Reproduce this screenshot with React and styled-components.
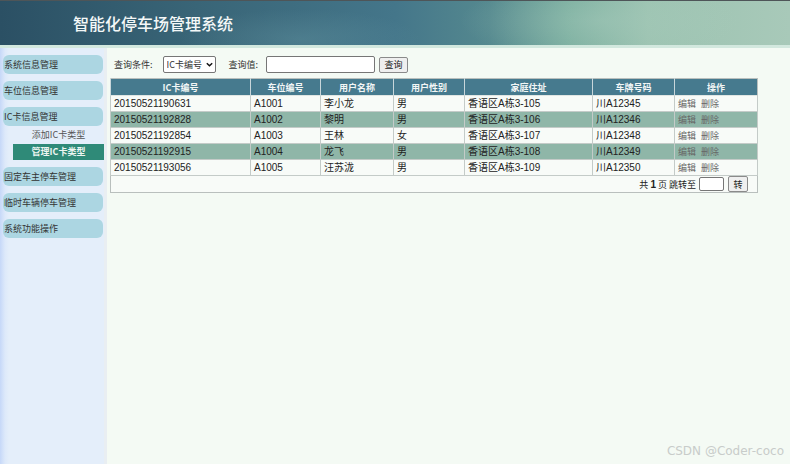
import React, { useState } from "react";
import styled, { createGlobalStyle } from "styled-components";

const GlobalStyle = createGlobalStyle`
  html, body {
    margin: 0;
    padding: 0;
    height: 100%;
    background: #f4faf4;
    font-family: "Liberation Sans", "Noto Sans CJK SC", sans-serif;
  }
  #root {
    height: 100%;
  }
`;

const menus = [
  { title: "系统信息管理" },
  { title: "车位信息管理" },
  { title: "IC卡信息管理", children: ["添加IC卡类型", "管理IC卡类型"] },
  { title: "固定车主停车管理" },
  { title: "临时车辆停车管理" },
  { title: "系统功能操作" },
];

const rows = [
  ["20150521190631", "A1001", "李小龙", "男", "香语区A栋3-105", "川A12345"],
  ["20150521192828", "A1002", "黎明", "男", "香语区A栋3-106", "川A12346"],
  ["20150521192854", "A1003", "王林", "女", "香语区A栋3-107", "川A12348"],
  ["20150521192915", "A1004", "龙飞", "男", "香语区A栋3-108", "川A12349"],
  ["20150521193056", "A1005", "汪苏泷", "男", "香语区A栋3-109", "川A12350"],
];

const columns = [
  { label: "IC卡编号", width: 140 },
  { label: "车位编号", width: 70 },
  { label: "用户名称", width: 73 },
  { label: "用户性别", width: 71 },
  { label: "家庭住址", width: 128 },
  { label: "车牌号码", width: 82 },
  { label: "操作", width: 83 },
];

export default function App() {
  const [active, setActive] = useState("管理IC卡类型");
  return (
    <Page>
      <GlobalStyle />
      <Header>
        <h1>智能化停车场管理系统</h1>
      </Header>
      <Body>
        <Sidebar>
          {menus.map((menu) => (
            <MenuGroup key={menu.title}>
              <MenuPill>{menu.title}</MenuPill>
              {menu.children && (
                <SubList>
                  {menu.children.map((child) => (
                    <SubItem
                      key={child}
                      $active={active === child}
                      onClick={() => setActive(child)}
                    >
                      {child}
                    </SubItem>
                  ))}
                </SubList>
              )}
            </MenuGroup>
          ))}
        </Sidebar>
        <Main>
          <SearchBar>
            <label>查询条件:</label>
            <SelectWrap>
              <Select defaultValue="IC卡编号">
                <option>IC卡编号</option>
                <option>车位编号</option>
              </Select>
              <Chevron viewBox="0 0 10 10">
                <path d="M2 3.5 L5 6.5 L8 3.5" fill="none" stroke="#111" strokeWidth="1.6" />
              </Chevron>
            </SelectWrap>
            <label className="value">查询值:</label>
            <SearchInput />
            <SmallButton $w={29}>查询</SmallButton>
          </SearchBar>
          <Table>
            <colgroup>
              {columns.map((c) => (
                <col key={c.label} style={{ width: c.width }} />
              ))}
            </colgroup>
            <thead>
              <tr>
                {columns.map((c) => (
                  <th key={c.label}>{c.label}</th>
                ))}
              </tr>
            </thead>
            <tbody>
              {rows.map((row, i) => (
                <Row key={row[0]} $alt={i % 2 === 1}>
                  {row.map((cell, j) => (
                    <td key={j}>{cell}</td>
                  ))}
                  <td>
                    <Action>编辑</Action>
                    <Action>删除</Action>
                  </td>
                </Row>
              ))}
              <tr>
                <PagerCell colSpan={7}>
                  <Pager>
                    <span>
                      共 <b>1</b> 页 跳转至
                    </span>
                    <PageInput />
                    <SmallButton $w={20}>转</SmallButton>
                  </Pager>
                </PagerCell>
              </tr>
            </tbody>
          </Table>
        </Main>
      </Body>
      <Watermark>CSDN @Coder-coco</Watermark>
    </Page>
  );
}

const Page = styled.div`
  height: 100%;
  display: flex;
  flex-direction: column;
  position: relative;
`;

const Header = styled.header`
  height: 44px;
  border-top: 1px solid #4e5558;
  border-bottom: 3px solid #d2e8de;
  display: flex;
  align-items: center;
  padding-left: 73px;
  background:
    radial-gradient(ellipse 120px 30px at 300px 38px, rgba(110, 160, 170, 0.3), transparent),
    radial-gradient(ellipse 140px 40px at 600px 20px, rgba(170, 205, 190, 0.4), transparent),
    linear-gradient(90deg, #2b5064 0%, #396577 25%, #44768a 50%, #55898f 62%, #7aae9f 72%, #9cc3b1 82%, #a8c9b9 100%);
  h1 {
    margin: 0;
    color: #f4f8f8;
    font-family: "Noto Sans CJK SC", sans-serif;
    font-weight: 500;
    font-size: 16px;
  }
`;

const Body = styled.div`
  flex: 1;
  display: flex;
`;

const Sidebar = styled.nav`
  flex-shrink: 0;
  padding: 7px 4px 0 3px;
  box-sizing: border-box;
  width: 107px;
  border-right: 3px solid #e9eef2;
  background: linear-gradient(90deg, #c6d8f8 0px, #dde9fa 5px, #e4eefa 9px, #e4eefa 100%);
  display: flex;
  flex-direction: column;
  gap: 7px;
`;

const MenuGroup = styled.div`
  display: flex;
  flex-direction: column;
`;

const MenuPill = styled.div`
  height: 19px;
  line-height: 19px;
  width: 100px;
  border-radius: 6px;
  background: #acd6e2;
  color: #333;
  font-family: "Noto Sans CJK SC", sans-serif;
  font-size: 9px;
  padding-left: 1px;
  box-sizing: border-box;
  white-space: nowrap;
`;

const SubList = styled.div`
  display: flex;
  flex-direction: column;
  padding-top: 2px;
  gap: 2px;
  margin-right: -4px;
`;

const SubItem = styled.div`
  margin-left: 10px;
  height: ${(p) => (p.$active ? "16px" : "14px")};
  line-height: ${(p) => (p.$active ? "16px" : "14px")};
  text-align: center;
  font-family: "Noto Sans CJK SC", sans-serif;
  font-size: 9px;
  font-weight: ${(p) => (p.$active ? 700 : 400)};
  color: ${(p) => (p.$active ? "#eef6f2" : "#555")};
  background: ${(p) => (p.$active ? "#2f8a78" : "transparent")};
  cursor: pointer;
`;

const Main = styled.main`
  flex: 1;
  padding: 8px 0 0 3px;
`;

const SearchBar = styled.div`
  display: flex;
  align-items: center;
  height: 17px;
  padding-left: 4px;
  font-family: "Noto Sans CJK SC", sans-serif;
  font-size: 9px;
  color: #333;
  label {
    margin-right: 10px;
  }
  label.value {
    margin-left: 13px;
    margin-right: 8px;
  }
`;

const SelectWrap = styled.div`
  position: relative;
  display: flex;
`;

const Select = styled.select`
  appearance: none;
  width: 53px;
  height: 17px;
  font-family: "Noto Sans CJK SC", sans-serif;
  font-size: 9px;
  color: #333;
  padding: 0 0 0 3px;
  border: 1px solid #767676;
  border-radius: 2px;
  background: #fff;
`;

const Chevron = styled.svg`
  position: absolute;
  right: 2px;
  top: 4px;
  width: 9px;
  height: 9px;
  pointer-events: none;
`;

const SearchInput = styled.input`
  width: 109px;
  height: 17px;
  box-sizing: border-box;
  border: 1px solid #767676;
  border-radius: 2px;
  background: #fff;
  margin-right: 4px;
`;

const SmallButton = styled.button`
  width: ${(p) => p.$w}px;
  height: 16px;
  padding: 0;
  font-family: "Noto Sans CJK SC", sans-serif;
  font-size: 9px;
  color: #222;
  background: #efefef;
  border: 1px solid #8a8a8a;
  border-radius: 2px;
`;

const Table = styled.table`
  margin-top: 5px;
  width: 647px;
  border-collapse: collapse;
  table-layout: fixed;
  border: 1px solid #b9bfbd;
  font-size: 10px;
  color: #222;
  th {
    height: 16px;
    padding: 0;
    background: #467a8e;
    color: #f2f6f6;
    font-family: "Noto Sans CJK SC", sans-serif;
    font-weight: 700;
    font-size: 9px;
    text-align: center;
    border-left: 1px solid #c8d6da;
  }
`;

const Row = styled.tr`
  background: ${(p) => (p.$alt ? "#8fb6a8" : "#f8fbf8")};
  td {
    height: 15px;
    padding: 0 0 0 3px;
    border: 1px solid #c4cbc8;
    border-top-color: ${(p) => (p.$alt ? "#c4cbc8" : "#e0e6e3")};
    font-family: "Liberation Sans", "Noto Sans CJK SC", sans-serif;
    font-size: 10px;
    white-space: nowrap;
    overflow: hidden;
    line-height: 15px;
  }
`;

const Action = styled.span`
  font-family: "Noto Sans CJK SC", sans-serif;
  font-size: 9px;
  color: #666;
  margin-right: 5px;
`;

const PagerCell = styled.td`
  height: 16px;
  padding: 0 9px 0 0;
  background: #f8fbf8;
`;

const Pager = styled.div`
  display: flex;
  justify-content: flex-end;
  align-items: center;
  gap: 3px;
  font-family: "Noto Sans CJK SC", sans-serif;
  font-size: 9px;
  color: #222;
  b {
    font-family: "Liberation Sans", sans-serif;
    font-size: 10px;
  }
`;

const PageInput = styled.input`
  width: 25px;
  height: 14px;
  box-sizing: border-box;
  border: 1px solid #767676;
  border-radius: 2px;
  background: #fff;
  margin: 0 1px 0 0;
  padding: 0;
`;

const Watermark = styled.div`
  position: absolute;
  right: 6px;
  bottom: 6px;
  font-family: "DejaVu Sans", sans-serif;
  font-size: 12px;
  color: #c8ccca;
`;
